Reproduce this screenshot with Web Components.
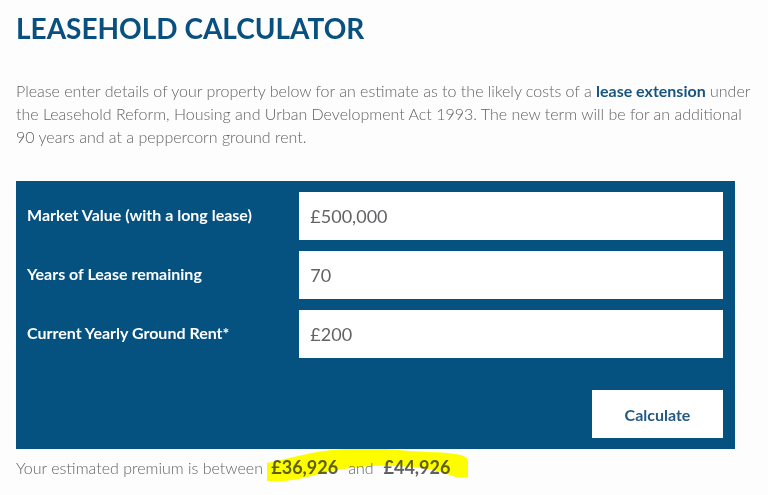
<!DOCTYPE html>
<html lang="en">
<head>
<meta charset="utf-8">
<meta name="viewport" content="width=device-width, initial-scale=1">
<title>Leasehold Calculator</title>
<style>
  body {
    margin: 0;
    background: #fdfdfd;
    color: #626365;
    font: 300 16px/23px Lato, "Liberation Sans", sans-serif;
  }
</style>
</head>
<body>
<leasehold-calculator>
  <span slot="title">LEASEHOLD CALCULATOR</span>
  <intro-text slot="intro">Please enter details of your property below for an estimate as to the likely costs of a <a href="#lease-extension">lease extension</a> under the Leasehold Reform, Housing and Urban Development Act 1993. The new term will be for an additional 90 years and at a peppercorn ground rent.</intro-text>
  <calc-field label="Market Value (with a long lease)" value="£500,000"></calc-field>
  <calc-field label="Years of Lease remaining" value="70"></calc-field>
  <calc-field label="Current Yearly Ground Rent*" value="£200"></calc-field>
  <premium-result slot="result" low="£36,926" high="£44,926"></premium-result>
</leasehold-calculator>

<script>
// whole page: heading, intro, blue form panel, result line
class LeaseholdCalculator extends HTMLElement {
  constructor() {
    super();
    this.attachShadow({ mode: "open" });
  }

  connectedCallback() {
    this.shadowRoot.innerHTML = `
      <style>
        :host {
          display: block;
          padding: 12px 16px;
        }

        h1 {
          margin: 0 0 34px;
          color: #07507f;
          font-size: 28px;
          font-weight: 700;
          line-height: 33px;
        }

        form {
          display: flex;
          flex-direction: column;
          gap: 11px;
          margin: 33px 17px 7px 0;
          padding: 11px 12px 11px 11px;
          background: #055180;
        }

        button {
          align-self: flex-end;
          margin-top: 21px;
          width: 131px;
          height: 48px;
          border: 0;
          background: #fff;
          color: #245a82;
          font: 700 16px/23px Lato, "Liberation Sans", sans-serif;
          cursor: pointer;
        }
      </style>

      <h1><slot name="title"></slot></h1>
      <slot name="intro"></slot>
      <form>
        <slot></slot>
        <button type="button">Calculate</button>
      </form>
      <slot name="result"></slot>
    `;
  }
}

class IntroText extends HTMLElement {
  constructor() {
    super();
    this.attachShadow({ mode: "open" });
  }

  connectedCallback() {
    this.shadowRoot.innerHTML = `
      <style>
        :host {
          display: block;
        }

        ::slotted(a) {
          color: #17557f;
          font-weight: 700;
          text-decoration: none;
        }
      </style>
      <slot></slot>
    `;
  }
}

// label on the left, text box on the right
class CalcField extends HTMLElement {
  constructor() {
    super();
    this.attachShadow({ mode: "open" });
  }

  connectedCallback() {
    this.shadowRoot.innerHTML = `
      <style>
        :host {
          display: grid;
          grid-template-columns: 9fr 14fr;
          align-items: center;
          color: #fff;
          font-weight: 700;
        }

        label {
          padding-bottom: 4px;
        }

        input {
          box-sizing: border-box;
          width: 100%;
          height: 48px;
          padding: 0 11px;
          border: 0;
          border-radius: 0;
          background: #fff;
          color: #626365;
          font: 400 18px/23px Lato, "Liberation Sans", sans-serif;
        }
      </style>
      <label for="field"></label>
      <input id="field" type="text">
    `;
    this.shadowRoot.querySelector("label").textContent = this.getAttribute("label");
    this.shadowRoot.querySelector("input").value = this.getAttribute("value");
  }
}

// result sentence with marker pen over the two amounts
class PremiumResult extends HTMLElement {
  constructor() {
    super();
    this.attachShadow({ mode: "open" });
  }

  connectedCallback() {
    this.shadowRoot.innerHTML = `
      <style>
        :host {
          display: block;
        }

        .marked {
          display: inline-flex;
          gap: 10px;
          position: relative;
          margin-left: 4px;
        }

        b {
          color: #5f6062;
          font-size: 18px;
          font-weight: 700;
        }

        svg {
          position: absolute;
          left: -4px;
          top: -8px;
          width: 201px;
          height: 34px;
          mix-blend-mode: multiply;
        }
      </style>
      Your estimated premium is between
      <span class="marked">
        <b id="low"></b><span>and</span><b id="high"></b>
        <svg viewBox="0 0 201 34" aria-hidden="true">
          <path fill="#ffff00" d="M0 15 Q22 10 40 6 Q62 1 85 1 L120 1 Q140 3 160 4 Q180 4 194 7 Q201 9 201 14 L201 29 Q193 31 182 27 C170 21 140 17 105 18 Q72 20 48 27 Q20 35 0 33 Z"/>
        </svg>
      </span>
    `;
    this.shadowRoot.querySelector("#low").textContent = this.getAttribute("low");
    this.shadowRoot.querySelector("#high").textContent = this.getAttribute("high");
  }
}

customElements.define("leasehold-calculator", LeaseholdCalculator);
customElements.define("intro-text", IntroText);
customElements.define("calc-field", CalcField);
customElements.define("premium-result", PremiumResult);
</script>
</body>
</html>
